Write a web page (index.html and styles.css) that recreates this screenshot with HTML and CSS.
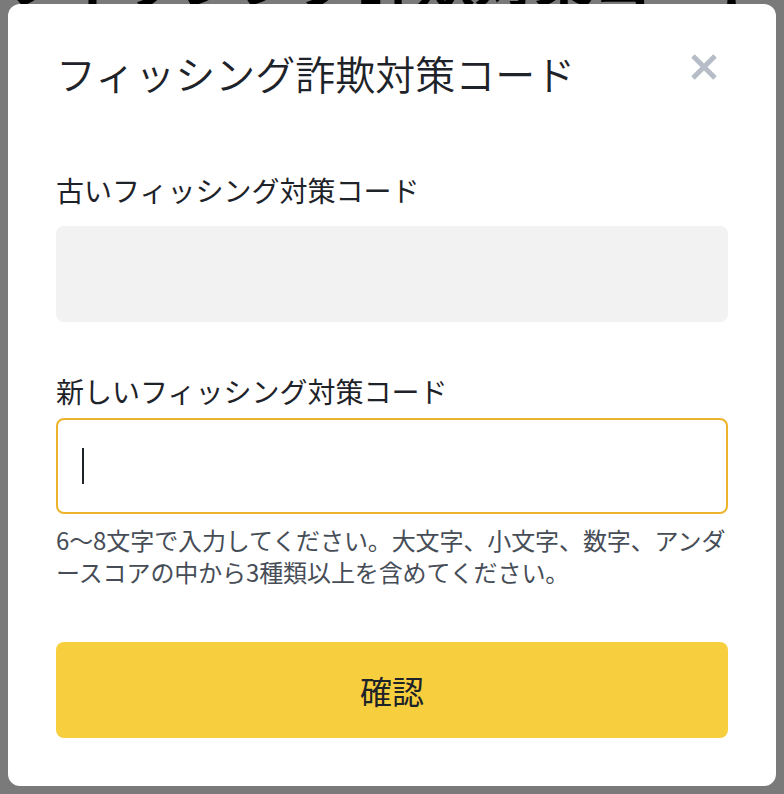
FILE: index.html
```html
<!DOCTYPE html>
<html lang="ja">
<head>
<meta charset="utf-8">
<title>フィッシング詐欺対策コード</title>
<link rel="stylesheet" href="styles.css">
</head>
<body>
<h1 class="bg-title">フィッシング詐欺対策コード</h1>
<div class="overlay">
  <div class="modal">
    <div class="modal-header">
      <h2 class="modal-title">フィッシング詐欺対策コード</h2>
      <button class="close" type="button" aria-label="閉じる">
        <svg width="28" height="28" viewBox="0 0 28 28"><path d="M3 3 L25 25 M25 3 L3 25" stroke="#B7BDC6" stroke-width="5" fill="none"/></svg>
      </button>
    </div>
    <label class="label label-old">古いフィッシング対策コード</label>
    <div class="field field-disabled"></div>
    <label class="label label-new">新しいフィッシング対策コード</label>
    <div class="field field-focused"><span class="caret"></span></div>
    <p class="hint">6〜8文字で入力してください。大文字、小文字、数字、アンダ<br>ースコアの中から3種類以上を含めてください。</p>
    <button class="confirm" type="button">確認</button>
  </div>
</div>
</body>
</html>
```

FILE: styles.css
```css
body {
  margin: 0;
  width: 784px;
  height: 794px;
  position: relative;
  overflow: hidden;
  background: #f5f5f5;
  font-family: "Noto Sans CJK JP", "Noto Sans", sans-serif;
  color: #1E2329;
}

.bg-title {
  position: absolute;
  top: -52px;
  left: 4px;
  margin: 0;
  font-size: 59px;
  font-weight: 700;
  line-height: 1;
  color: #000;
  white-space: nowrap;
}

.overlay {
  position: absolute;
  inset: 0;
  background: rgba(0, 0, 0, 0.5);
  display: flex;
  align-items: flex-start;
  padding: 4px 8px 0 8px;
}

.modal {
  width: 768px;
  box-sizing: border-box;
  background: #fff;
  border-radius: 12px;
  padding: 45px 48px 48px;
  display: flex;
  flex-direction: column;
}

.modal-header {
  display: flex;
  justify-content: space-between;
  align-items: flex-start;
  height: 48px;
}

.modal-title {
  margin: 0;
  font-size: 40px;
  font-weight: 350;
  line-height: 48px;
  color: #1E2329;
}

.close {
  width: 48px;
  height: 36px;
  padding: 0;
  border: 0;
  background: none;
  display: flex;
  align-items: center;
  justify-content: center;
}

.label {
  display: block;
  font-size: 28px;
  line-height: 40px;
  color: #1E2329;
}

.label-old {
  margin-top: 73px;
  margin-bottom: 16px;
}

.label-new {
  margin-top: 49px;
  margin-bottom: 7px;
}

.field {
  height: 96px;
  box-sizing: border-box;
  border-radius: 8px;
}

.field-disabled {
  background: #F2F2F2;
}

.field-focused {
  border: 2px solid #EDB32B;
  padding-left: 24px;
  display: flex;
  align-items: center;
}

.caret {
  width: 2px;
  height: 36px;
  background: #1E2329;
}

.hint {
  margin: 10px 0 0;
  font-size: 24px;
  line-height: 32px;
  color: #474D57;
  letter-spacing: -0.1px;
  white-space: nowrap;
}

.confirm {
  margin-top: 54px;
  height: 96px;
  border: 0;
  border-radius: 8px;
  background: #F7CF3E;
  font-family: inherit;
  font-size: 32px;
  color: #1E2329;
}
```
